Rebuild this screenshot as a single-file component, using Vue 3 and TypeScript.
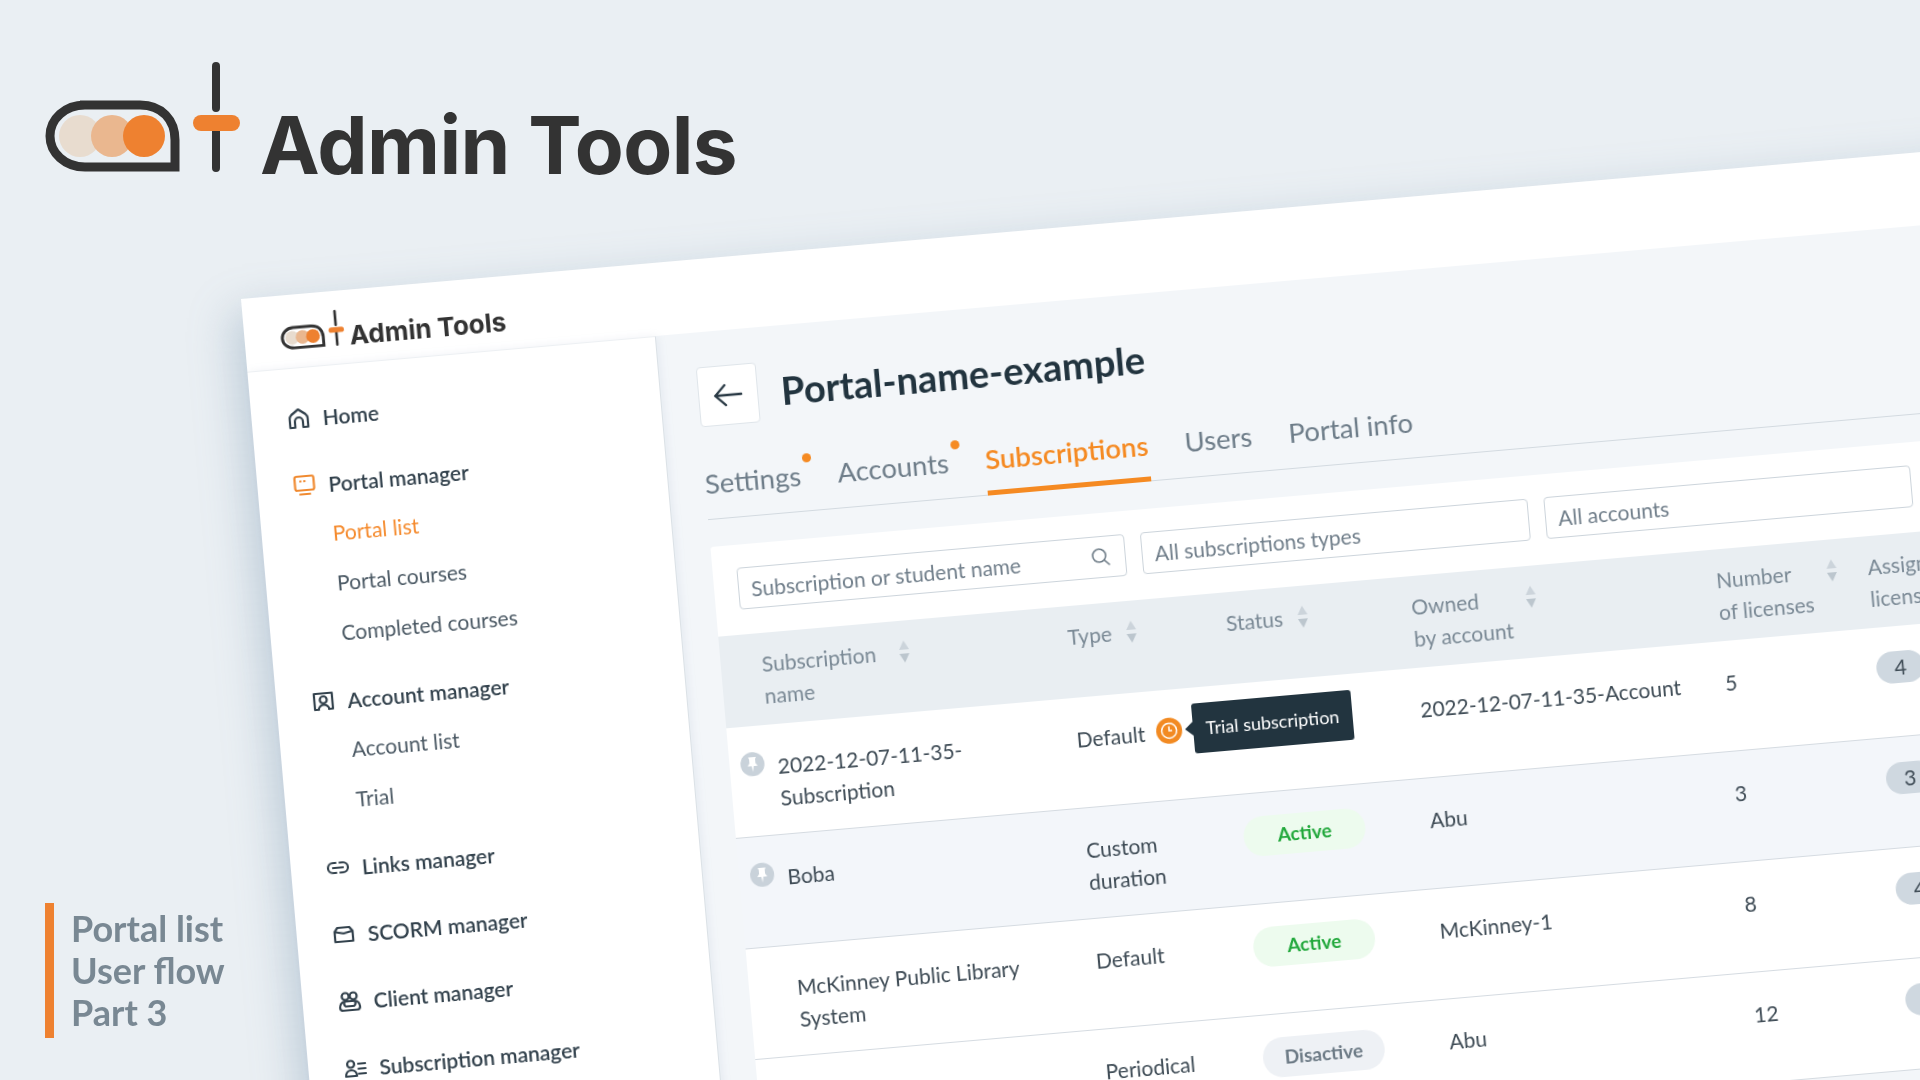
<template>
  <div class="page">
    <svg class="defs" width="0" height="0" aria-hidden="true">
      <symbol id="logo" viewBox="0 0 195 110">
        <path d="M35 43h60c22 0 35 15 35 35v27H40c-20 0-35-14-35-31s15-31 35-31z" fill="#fff" fill-opacity="0" stroke="#333" stroke-width="9" />
        <circle cx="35" cy="74" r="21" fill="#e8dccf" />
        <circle cx="67" cy="74" r="21" fill="#eab78f" />
        <circle cx="99" cy="74" r="21" fill="#ee8130" />
        <path d="M171 4v42M171 60v46" stroke="#333" stroke-width="8" stroke-linecap="round" fill="none" />
        <rect x="148" y="53" width="47" height="16" rx="8" fill="#ee8130" />
      </symbol>
      <symbol id="i-home" viewBox="0 0 24 24">
        <path d="M3 21v-9c0-2 1-3 2-4l7-5 7 5c1 1 2 2 2 4v9h-5v-6a4 4 0 0 0-8 0v6z" />
      </symbol>
      <symbol id="i-portal" viewBox="0 0 24 24">
        <rect x="2.500" y="3" width="19" height="14" rx="2" />
        <path d="M7 21h10M8 8h.5M12 8h.5" />
      </symbol>
      <symbol id="i-account" viewBox="0 0 24 24">
        <path d="M7 20H3V4h18v16h-4" />
        <circle cx="12" cy="10.500" r="3.500" />
        <path d="M6.500 20c1-3 3-4.500 5.500-4.500s4.500 1.500 5.500 4.500" />
      </symbol>
      <symbol id="i-links" viewBox="0 0 24 24">
        <path d="M10 7H7a5 5 0 0 0 0 10h3M14 7h3a5 5 0 0 1 0 10h-3M7 12h10" />
      </symbol>
      <symbol id="i-scorm" viewBox="0 0 24 24">
        <path d="M3 9l3-4h12l3 4v10H3zM3 9l9 2 9-2" />
      </symbol>
      <symbol id="i-client" viewBox="0 0 24 24">
        <circle cx="8" cy="7" r="3.500" />
        <circle cx="16" cy="7" r="3.500" />
        <path d="M5 21c-2 0-3-1-3-3 0-3 2-6 5-6h10c3 0 5 3 5 6 0 2-1 3-3 3zM7 12c-1 2-1 4 1 5h8c2-1 2-3 1-5" />
      </symbol>
      <symbol id="i-subs" viewBox="0 0 24 24">
        <circle cx="7.500" cy="8" r="3.500" />
        <path d="M2 20c0-4 2.500-6 5.500-6s5.500 2 5.500 6zM15 8h7M15 13h7M15 18h7" />
      </symbol>
    </svg>

    <header class="brand">
      <svg class="brand-mark"><use href="#logo" /></svg>
      <span class="brand-name">Admin Tools</span>
    </header>

    <aside class="note">
      <p>Portal list</p>
      <p>User flow</p>
      <p>Part 3</p>
    </aside>

    <section class="window">
      <div class="topbar">
        <svg class="topbar-mark"><use href="#logo" /></svg>
        <span class="topbar-name">Admin Tools</span>
      </div>

      <div class="body">
        <nav class="sidebar">
          <div v-for="group in nav" :key="group.label" class="nav-group">
            <div class="nav-head">
              <svg class="nav-icon" :class="{ 'nav-icon-on': group.active }"><use :href="`#${group.icon}`" /></svg>
              <span>{{ group.label }}</span>
            </div>
            <div
              v-for="child in group.children"
              :key="child"
              class="nav-child"
              :class="{ 'nav-child-on': child === 'Portal list' }"
            >
              {{ child }}
            </div>
          </div>
        </nav>

        <main class="content">
          <div class="title-row">
            <button class="back" type="button" aria-label="Back">
              <svg width="30" height="24" viewBox="0 0 30 24" fill="none" stroke="#2b3b46" stroke-width="2.400" stroke-linecap="round" stroke-linejoin="round">
                <path d="M28 12H2M12 2L2 12l10 10" />
              </svg>
            </button>
            <h1>Portal-name-example</h1>
          </div>

          <div class="tabs">
            <div v-for="tab in tabs" :key="tab.label" class="tab" :class="{ 'tab-on': tab.label === 'Subscriptions' }">
              {{ tab.label }}
              <i v-if="tab.dot" class="tab-dot"></i>
            </div>
          </div>

          <div class="card">
            <div class="filters">
              <div class="field field-search">
                <span>Subscription or student name</span>
                <svg width="20" height="20" viewBox="0 0 20 20" fill="none" stroke="#6f7d88" stroke-width="1.600" stroke-linecap="round">
                  <circle cx="8.500" cy="8.500" r="6.500" />
                  <path d="M13.500 13.500L18 18" />
                </svg>
              </div>
              <div class="field"><span>All subscriptions types</span></div>
              <div class="field field-last"><span>All accounts</span></div>
            </div>

            <div class="table-head grid">
              <div v-for="col in columns" :key="col.label" class="th" :class="col.cls">
                <span class="th-text">{{ col.label }}<br v-if="col.second" />{{ col.second }}</span>
                <svg v-if="col.sort" class="sort" width="12" height="26" viewBox="0 0 12 26">
                  <path d="M6 2l5 9H1z" fill="#ccd4db" />
                  <path d="M6 24l5-9H1z" fill="#bcc6ce" />
                </svg>
              </div>
            </div>

            <div v-for="(row, i) in rows" :key="i" class="table-row grid" :class="{ 'row-alt': i === 1 }">
              <div class="td td-name">
                <svg v-if="row.pinned" class="pin" width="24" height="24" viewBox="0 0 24 24">
                  <circle cx="12" cy="12" r="12" fill="#c9d2da" />
                  <path d="M8 5h8l-1 2v4l2 3H7l2-3V7zM11 14h2l-1 6z" fill="#fff" />
                </svg>
                <span>{{ row.name }}</span>
              </div>
              <div class="td td-type">
                <span>{{ row.type }}</span>
                <span v-if="row.trial" class="trial">
                  <svg width="26" height="26" viewBox="0 0 26 26">
                    <circle cx="13" cy="13" r="13" fill="#f28a22" />
                    <circle cx="13" cy="13" r="7.500" fill="none" stroke="#fff" stroke-width="1.500" />
                    <path d="M13 8.500V13h3" fill="none" stroke="#fff" stroke-width="1.500" />
                  </svg>
                  <span class="tooltip">Trial subscription</span>
                </span>
              </div>
              <div class="td">
                <span v-if="row.status" class="status" :class="row.status === 'Active' ? 'status-on' : 'status-off'">{{ row.status }}</span>
              </div>
              <div class="td">{{ row.owner }}</div>
              <div class="td">{{ row.total }}</div>
              <div class="td"><span class="count">{{ row.assigned }}</span></div>
            </div>
          </div>
        </main>
      </div>
    </section>
  </div>
</template>

<script setup lang="ts">
interface NavGroup {
  label: string
  icon: string
  active?: boolean
  children?: string[]
}

const nav: NavGroup[] = [
  { label: 'Home', icon: 'i-home' },
  { label: 'Portal manager', icon: 'i-portal', active: true, children: ['Portal list', 'Portal courses', 'Completed courses'] },
  { label: 'Account manager', icon: 'i-account', children: ['Account list', 'Trial'] },
  { label: 'Links manager', icon: 'i-links' },
  { label: 'SCORM manager', icon: 'i-scorm' },
  { label: 'Client manager', icon: 'i-client' },
  { label: 'Subscription manager', icon: 'i-subs' }
]

const tabs = [
  { label: 'Settings', dot: true },
  { label: 'Accounts', dot: true },
  { label: 'Subscriptions', dot: false },
  { label: 'Users', dot: false },
  { label: 'Portal info', dot: false }
]

const columns = [
  { label: 'Subscription', second: 'name', sort: true, cls: 'th-name' },
  { label: 'Type', second: '', sort: true, cls: '' },
  { label: 'Status', second: '', sort: true, cls: '' },
  { label: 'Owned', second: 'by account', sort: true, cls: '' },
  { label: 'Number', second: 'of licenses', sort: true, cls: '' },
  { label: 'Assigned', second: 'licenses', sort: false, cls: '' }
]

const rows = [
  { name: '2022-12-07-11-35-Subscription', pinned: true, type: 'Default', trial: true, status: '', owner: '2022-12-07-11-35-Account', total: 5, assigned: 4 },
  { name: 'Boba', pinned: true, type: 'Custom duration', trial: false, status: 'Active', owner: 'Abu', total: 3, assigned: 3 },
  { name: 'McKinney Public Library System', pinned: false, type: 'Default', trial: false, status: 'Active', owner: 'McKinney-1', total: 8, assigned: 4 },
  { name: '', pinned: false, type: 'Periodical', trial: false, status: 'Disactive', owner: 'Abu', total: 12, assigned: 1 }
]
</script>

<style>
html,
body {
  margin: 0;
  background: #eaeff3;
}
</style>

<style scoped>
.page {
  position: relative;
  width: 1920px;
  height: 1080px;
  overflow: hidden;
  background: #eaeff3;
  font-family: Lato, "Liberation Sans", sans-serif;
  display: flex;
  flex-direction: column;
  justify-content: space-between;
}

.defs {
  position: absolute;
}

.brand {
  display: flex;
  align-items: flex-end;
  gap: 20px;
  padding: 62px 0 0 45px;
  filter: blur(0.4px);
}

.brand-mark {
  width: 195px;
  height: 110px;
}

.brand-name {
  font-family: Inter, "Liberation Sans", sans-serif;
  font-size: 80px;
  font-weight: 700;
  line-height: 78px;
  margin-bottom: -12px;
  letter-spacing: -0.6px;
  color: #333;
  white-space: nowrap;
}

.note {
  border-left: 9px solid #ee8130;
  margin: 0 0 42px 45px;
  padding: 4px 0 0 17px;
  height: 135px;
  box-sizing: border-box;
  width: 260px;
  filter: blur(0.4px);
}

.note p {
  margin: 0;
  font-size: 36px;
  font-weight: 700;
  line-height: 42px;
  color: #798893;
}

/* window sits freely on the canvas, tilted */
.window {
  position: absolute;
  left: 241px;
  top: 299px;
  width: 1900px;
  height: 1000px;
  background: #fff;
  transform: rotate(-5deg);
  transform-origin: 0 0;
  box-shadow: -10px 14px 40px rgba(120, 150, 175, 0.4);
  filter: blur(0.45px);
  display: flex;
  flex-direction: column;
}

.topbar {
  height: 73px;
  flex: none;
  display: flex;
  align-items: center;
  gap: 5px;
  padding-left: 36px;
  box-sizing: border-box;
}

.topbar-mark {
  width: 64px;
  height: 36px;
}

.topbar-name {
  font-family: Inter, "Liberation Sans", sans-serif;
  font-size: 26px;
  font-weight: 700;
  color: #333;
  white-space: nowrap;
  margin-top: 17px;
}

.body {
  flex: 1;
  display: flex;
  min-height: 0;
}

.sidebar {
  width: 410px;
  flex: none;
  box-sizing: border-box;
  padding: 25px 0 0 35px;
  border-top: 1px solid #edf0f3;
  border-right: 1px solid #dbe1e6;
  box-shadow: 2px 0 8px rgba(140, 160, 180, 0.12);
  position: relative;
}

.nav-group {
  margin-bottom: 17px;
}

.nav-head {
  display: flex;
  align-items: center;
  gap: 12px;
  height: 50px;
  font-size: 21px;
  font-weight: 600;
  color: #33424d;
}

.nav-icon {
  width: 24px;
  height: 24px;
  fill: none;
  stroke: #33424d;
  stroke-width: 2.200;
  stroke-linecap: round;
  stroke-linejoin: round;
  flex: none;
}

.nav-icon-on {
  stroke: #f08a30;
}

.nav-child {
  height: 50px;
  line-height: 50px;
  padding-left: 36px;
  font-size: 21px;
  color: #4b5964;
}

.nav-child-on {
  color: #f58a2c;
}

.content {
  flex: 1;
  min-width: 0;
  background: #f3f6f9;
  padding: 35px 0 0 36px;
}

.title-row {
  display: flex;
  align-items: center;
  gap: 23px;
  padding-left: 1px;
}

.back {
  width: 60px;
  height: 60px;
  padding: 0;
  background: #fff;
  border: 1px solid #dfe5ea;
  border-radius: 4px;
  display: flex;
  align-items: center;
  justify-content: center;
  flex: none;
}

h1 {
  margin: 0;
  font-size: 38px;
  font-weight: 700;
  line-height: 46px;
  color: #22343f;
  white-space: nowrap;
}

.tabs {
  display: flex;
  gap: 36.500px;
  height: 66px;
  margin-top: 27px;
  box-sizing: border-box;
  border-bottom: 1px solid #d3dae0;
}

.tab {
  position: relative;
  height: 66px;
  box-sizing: border-box;
  padding-top: 13px;
  font-size: 27.500px;
  line-height: 34px;
  color: #6e7d89;
  white-space: nowrap;
}

.tab-on {
  color: #f58a22;
  font-weight: 600;
  border-bottom: 5px solid #f58a22;
}

.tab-dot {
  position: absolute;
  right: -12px;
  top: 8px;
  width: 9px;
  height: 9px;
  border-radius: 50%;
  background: #f58a22;
}

.card {
  margin-top: 27px;
  background: #fff;
  padding-top: 23px;
  border-radius: 3px 0 0 0;
}

.filters {
  display: flex;
  gap: 16px;
  padding: 0 24px;
  margin-bottom: 25px;
}

.field {
  width: 389px;
  height: 42px;
  box-sizing: border-box;
  background: #fff;
  border: 1px solid #ccd4db;
  border-radius: 4px;
  display: flex;
  align-items: center;
  justify-content: space-between;
  padding: 0 14px 0 12px;
  font-size: 21px;
  color: #707e8a;
  white-space: nowrap;
}

.field-last {
  width: 368px;
}

.grid {
  display: grid;
  grid-template-columns: 348px 159px 186px 306px 152px 1fr;
}

.table-head {
  height: 92px;
  background: #e9eef2;
  padding-top: 15px;
  box-sizing: border-box;
}

.th {
  display: flex;
  align-items: flex-start;
  gap: 14px;
  font-size: 21px;
  line-height: 32px;
  color: #7a8995;
}

.th-name {
  padding-left: 41px;
  gap: 22px;
}

.sort {
  margin-top: 3px;
  flex: none;
}

.table-row {
  height: 111px;
  box-sizing: border-box;
  background: #fff;
  border-bottom: 1px solid #d5dbe1;
}

.row-alt {
  background: #f3f6fa;
}

.td {
  padding-top: 26px;
  font-size: 21px;
  line-height: 32px;
  color: #3e4b55;
  display: flex;
  align-items: flex-start;
}

.td-name {
  position: relative;
  padding-left: 48px;
  width: 290px;
  box-sizing: border-box;
}

.pin {
  position: absolute;
  left: 11px;
  top: 26px;
}

.td-type > span:first-child {
  max-width: 90px;
}

.trial {
  position: relative;
  display: block;
  margin-left: 11px;
  height: 26px;
  margin-top: 2px;
}

.tooltip {
  position: absolute;
  left: 37px;
  top: -12px;
  width: 160px;
  height: 50px;
  box-sizing: border-box;
  background: #22343f;
  color: #fff;
  border-radius: 3px;
  font-size: 18px;
  line-height: 50px;
  text-align: center;
  white-space: nowrap;
}

.tooltip::before {
  content: "";
  position: absolute;
  left: -8px;
  top: 18px;
  border-style: solid;
  border-width: 7px 8px 7px 0;
  border-color: transparent #22343f transparent transparent;
}

.status {
  width: 122px;
  height: 40px;
  margin: -3px 0 0 -1px;
  border-radius: 20px;
  font-size: 19px;
  font-weight: 700;
  line-height: 40px;
  text-align: center;
}

.status-on {
  background: #edfbee;
  color: #22a83c;
}

.status-off {
  background: #eef1f5;
  color: #6c7a85;
}

.count {
  width: 48px;
  height: 32px;
  margin-top: -1px;
  border-radius: 16px;
  background: #cfd8e0;
  color: #3e4b55;
  text-align: center;
}
</style>
